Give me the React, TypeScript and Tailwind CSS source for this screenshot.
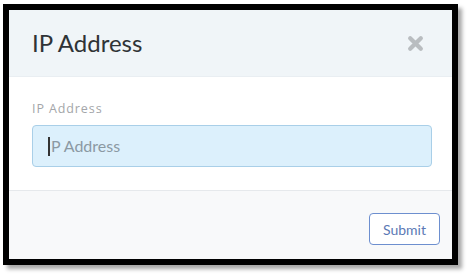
export default function App() {
  return (
    <div className="h-[277px] w-[474px] overflow-hidden bg-white pl-[3px] pt-[4px] font-['Lato',sans-serif]">
      {/* framed dialog snapshot */}
      <div className="flex h-[261px] w-[455px] flex-col border-[6px] border-black bg-white shadow-[4px_4px_4px_rgba(0,0,0,0.35)]">
        {/* Header */}
        <div className="flex h-[67px] items-center justify-between border-b border-[#e9eef2] bg-[#f0f5f8] pl-[23px] pr-[28px]">
          <h1 className="text-[24px] leading-none text-[#2f3336]">IP Address</h1>
          <svg width="17" height="17" viewBox="0 0 16 16" className="text-[#b9bdc0]">
            <path d="M3 3 L13 13 M13 3 L3 13" stroke="currentColor" strokeWidth="4" strokeLinecap="round" />
          </svg>
        </div>

        {/* Body */}
        <div className="flex h-[114px] flex-col border-b border-[#e6e9ec] pl-[23px] pr-[20px] pt-[24px]">
          <label className="font-['Open_Sans',sans-serif] text-[12.5px] leading-4 tracking-[0.9px] text-[#a3a6a9]">
            IP Address
          </label>
          <div className="mt-[8px] flex h-[42px] items-center rounded-[4px] border border-[#a9cfe8] bg-[#dcf0fc] pl-[15px]">
            <span className="mr-[1px] h-[19px] w-[2px] bg-[#333]" />
            <span className="text-[16px] text-[#8b99a3]">P Address</span>
          </div>
        </div>

        {/* Footer */}
        <div className="flex flex-1 items-start justify-end bg-[#f8f9fa] pr-[12px] pt-[22px]">
          <button className="h-[32px] w-[71px] rounded-[4px] border border-[#6d8fcf] bg-white text-[14px] text-[#5b79b5]">
            Submit
          </button>
        </div>
      </div>
    </div>
  )
}
